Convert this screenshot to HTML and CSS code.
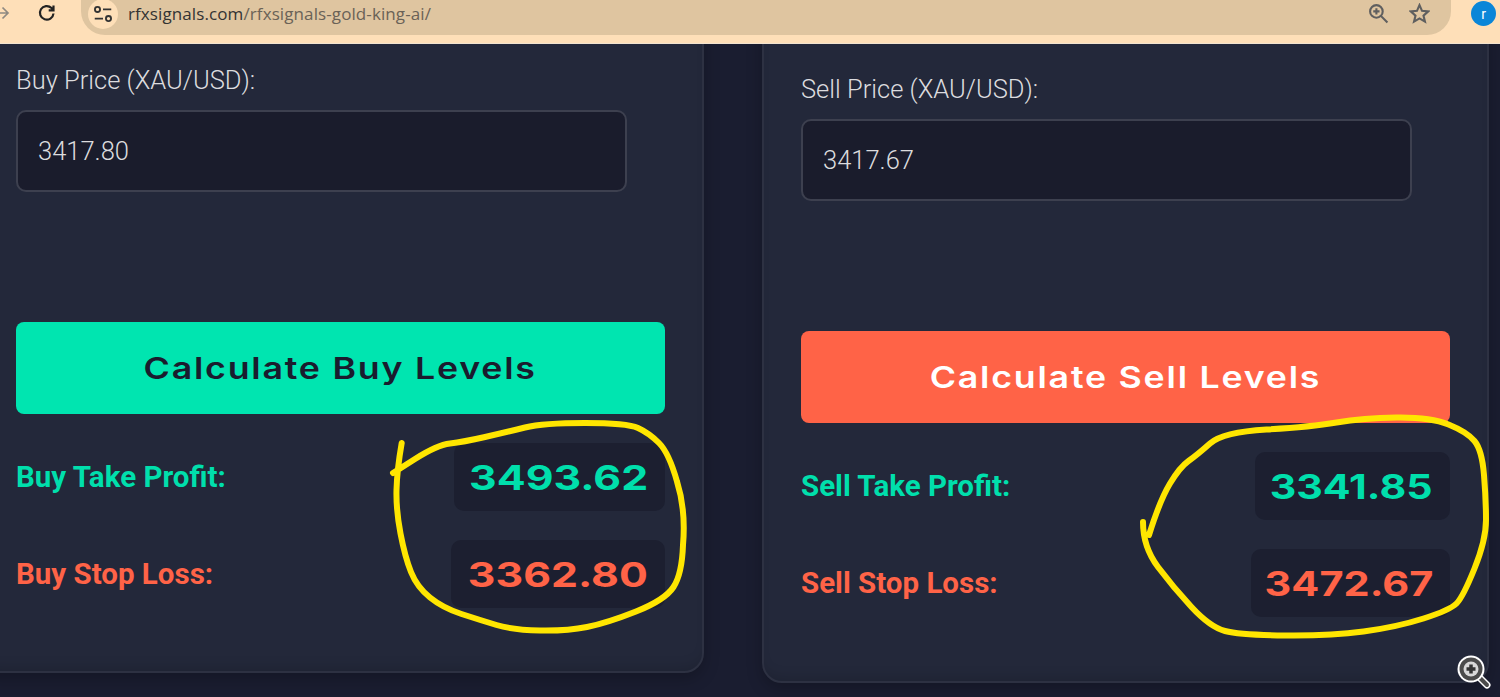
FILE: index.html
```html
<!DOCTYPE html>
<html lang="en">
<head>
<meta charset="utf-8">
<title>RFX Signals Gold King AI</title>
<link rel="stylesheet" href="styles.css">
</head>
<body>
<header class="chrome">
  <svg class="ico ico-forward" viewBox="0 0 12 20"><path d="M0 10H8M3.500 4.500L9 10L3.500 15.500"/></svg>
  <svg class="ico ico-reload" viewBox="0 0 20 20"><path d="M16.500 10.500A6.800 6.800 0 1 1 14.500 5L16.500 7M16.500 2.500V7.300H11.700"/></svg>
  <div class="omnibox">
    <span class="tune"><svg viewBox="0 0 24 24"><circle cx="6" cy="7" r="2.800"/><path d="M12 7H21M3 17H12"/><circle cx="18" cy="17" r="2.800"/></svg></span>
    <span class="url">rfxsignals.com<span class="url-path">/rfxsignals-gold-king-ai/</span></span>
    <span class="omni-actions">
      <svg class="ico ico-zoom" viewBox="0 0 20 20"><circle cx="8" cy="8" r="6"/><path d="M12.500 12.500L18.500 18.500M5 8H11M8 5V11"/></svg>
      <svg class="ico ico-star" viewBox="0 0 20 20"><path d="M10 2L12.400 7.500L18.300 8L13.800 12L15.200 17.800L10 14.700L4.800 17.800L6.200 12L1.700 8L7.600 7.500Z"/></svg>
    </span>
  </div>
  <span class="avatar">r</span>
</header>
<main class="stage">
  <section class="panel panel-buy">
    <label class="field-label">Buy Price (XAU/USD):</label>
    <div class="price-input">3417.80</div>
    <button class="calc calc-buy"><span class="wide">Calculate Buy Levels</span></button>
    <div class="result"><span class="res-label profit">Buy Take Profit:</span><span class="res-value profit val-a"><span class="digits">3493.62</span></span></div>
    <div class="result"><span class="res-label loss">Buy Stop Loss:</span><span class="res-value loss val-b"><span class="digits">3362.80</span></span></div>
  </section>
  <section class="panel panel-sell">
    <label class="field-label">Sell Price (XAU/USD):</label>
    <div class="price-input">3417.67</div>
    <button class="calc calc-sell"><span class="wide">Calculate Sell Levels</span></button>
    <div class="result"><span class="res-label profit">Sell Take Profit:</span><span class="res-value profit val-c"><span class="digits">3341.85</span></span></div>
    <div class="result"><span class="res-label loss">Sell Stop Loss:</span><span class="res-value loss val-d"><span class="digits">3472.67</span></span></div>
  </section>
</main>
<svg class="ink" viewBox="0 0 1500 697">
  <path d="M401.700 443Q397 470 396.500 490Q396 510 400.500 533.500Q405 557 411 572Q417 587 430 597.500Q443 608 461.500 614Q480 620 496.500 625Q513 630 540 630.500Q567 631 587 627Q607 623 636 611.500Q665 600 673.500 587Q682 574 683 545Q686 510 677 481.500Q669 453 659 443Q649 433 638 428Q627 423 585 423Q543 423 525 427.500Q507 432 485 437Q463 442 450 443.500Q437 445 415 459L393 473"/>
  <path d="M1149 535Q1160 500 1170 483.500Q1180 467 1188.500 461Q1197 455 1210 443.500Q1223 432 1266.500 429.500Q1310 427 1336.500 422.500Q1363 418 1396.500 417.500Q1430 417 1448.500 424.500Q1467 432 1474.500 441Q1482 450 1484 475Q1486 500 1486 520Q1486 540 1474.500 568.500Q1463 597 1456.500 603.500Q1450 610 1423.500 618.500Q1397 627 1363.500 631.500Q1330 636 1285 635.500Q1240 635 1225 631Q1210 627 1191.500 607Q1173 587 1158 567Q1143 547 1143 522"/>
</svg>
<svg class="cursor" viewBox="0 0 34 34">
  <path class="hand-out" d="M22 22L30 30"/>
  <path class="hand-in" d="M22 22L30 30"/>
  <circle class="ring-out" cx="14" cy="14" r="13.500"/>
  <circle class="ring-in" cx="14" cy="14" r="11.500"/>
  <circle class="lens" cx="14" cy="14" r="7.500"/>
  <path class="plus" d="M9.500 14H18.500M14 9.500V18.500"/>
</svg>
</body>
</html>
```
FILE: styles.css
```css
* { box-sizing: border-box; }
html, body { margin: 0; height: 697px; overflow: hidden; }
body { position: relative; background: #1a1d30; font-family: Roboto, "Liberation Sans", sans-serif; display: flex; flex-direction: column; }

.chrome { height: 44px; flex: none; background: #fedfb8; border-bottom: 1px solid #f2e3cf; display: flex; align-items: flex-start; position: relative; z-index: 2; }
.ico { fill: none; stroke: #5f5f5f; stroke-width: 1.700; }
.ico-forward { width: 12px; height: 20px; margin: 3px 0 0 -1px; stroke: #8f8a82; }
.ico-reload { width: 20px; height: 20px; margin: 3px 0 0 26px; stroke: #222; stroke-width: 2.200; }
.omnibox { width: 1370px; height: 35px; margin-left: 24px; background: #dfc5a0; border-radius: 0 0 24px 24px; display: flex; align-items: center; padding: 0 21px 8px 7px; }
.tune { width: 30px; height: 30px; border-radius: 50%; background: #fedfb8; display: flex; align-items: center; justify-content: center; }
.tune svg { width: 22px; height: 22px; fill: none; stroke: #333; stroke-width: 2; }
.url { margin-left: 10px; font: 17px "Open Sans", Roboto, sans-serif; letter-spacing: 0.100px; color: #333; }
.url-path { color: #6a6257; }
.omni-actions { margin-left: auto; display: flex; gap: 20px; }
.ico-zoom, .ico-star { width: 21px; height: 21px; stroke-width: 2; }
.avatar { width: 25px; height: 25px; margin: 1px 0 0 20px; border-radius: 50%; background: #0a86d8; color: #fff; font: 14px Roboto, sans-serif; display: flex; align-items: center; justify-content: center; }

.stage { flex: 1; display: flex; align-items: flex-start; gap: 58px; margin-left: -23px; overflow: hidden; min-height: 0; }
.panel { flex: none; width: 727px; margin-top: -40px; padding: 0 37px; background: #23283a; border: 2px solid #2d3142; border-radius: 20px; box-shadow: 0 6px 16px rgba(0,0,0,.22), inset 0 -10px 14px -8px rgba(0,0,0,.16); }
.panel-buy { height: 669px; padding-top: 59px; }
.panel-sell { height: 679px; padding-top: 68px; }
.field-label { display: block; height: 30px; font-size: 25.500px; font-weight: 300; line-height: 30px; color: #dcdcdf; }
.price-input { width: 611px; height: 82px; margin-top: 15px; background: #1a1c2c; border: 2px solid #3d404f; border-radius: 10px; padding-left: 20px; font-size: 25.500px; font-weight: 300; line-height: 78px; color: #dcdcdf; }
.calc { display: block; width: 649px; height: 92px; margin-top: 130px; border: 0; border-radius: 8px; padding: 0; font: 600 30px Inter, sans-serif; }
.wide { display: inline-block; letter-spacing: 1.500px; transform: scaleX(1.190); }
.calc-buy { background: #00e5b0; color: #1a1c2e; }
.calc-sell { background: #ff6347; color: #fff; }
.result { display: flex; width: 649px; align-items: center; justify-content: space-between; height: 68px; margin-top: 29px; }
.res-label { font-size: 29.500px; font-weight: 700; }
.res-value { display: block; height: 68px; padding-right: 17px; background: #1c1f30; border-radius: 10px; font: 700 34px Inter, sans-serif; line-height: 70px; text-align: right; }
.val-a { width: 211px; }
.val-b { width: 214px; }
.val-c { width: 195px; }
.val-d { width: 199px; }
.digits { display: inline-block; transform: scaleX(1.260); transform-origin: right center; }
.val-c .digits { transform: scaleX(1.210); }
.val-d .digits { transform: scaleX(1.220); }
.profit { color: #00dfac; }
.loss { color: #ff6347; }

.ink { position: absolute; inset: 0; width: 1500px; height: 697px; fill: none; stroke: #ffe600; stroke-width: 6; stroke-linecap: round; stroke-linejoin: round; z-index: 3; }
.cursor { position: absolute; left: 1457px; top: 655px; width: 34px; height: 34px; z-index: 4; }
.cursor circle, .cursor path { fill: none; }
.cursor .ring-out { fill: #fff; }
.cursor .ring-in { fill: #4b4b4b; }
.cursor .lens { fill: #d8d8d8; }
.cursor .plus { stroke: #333; stroke-width: 3.500; }
.cursor .hand-out { stroke: #fff; stroke-width: 7; stroke-linecap: round; }
.cursor .hand-in { stroke: #4b4b4b; stroke-width: 4; stroke-linecap: round; }
```
